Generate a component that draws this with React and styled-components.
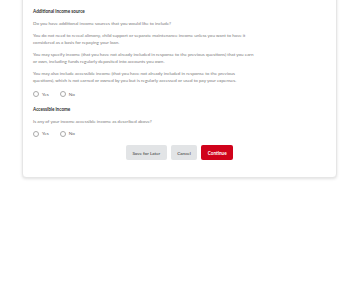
import styled, { createGlobalStyle } from "styled-components";

const GlobalStyle = createGlobalStyle`
  html, body {
    margin: 0;
    padding: 0;
    background: #ffffff;
  }
  body {
    font-family: Lato, "Open Sans", sans-serif;
    -webkit-text-size-adjust: none;
  }
`;

export default function App() {
  return (
    <>
      <GlobalStyle />
      <Page>
        <Card>
          <Body>
            <Heading>Additional income source</Heading>
            <Text>Do you have additional income sources that you would like to include?</Text>
            <Text>
              You do not need to reveal alimony, child support or separate maintenance income unless you want to have it
              considered as a basis for repaying your loan.
            </Text>
            <Text>
              You may specify income (that you have not already included in response to the previous questions) that you
              earn or own, including funds regularly deposited into accounts you own.
            </Text>
            <Text>
              You may also include accessible income (that you have not already included in response to the previous
              questions), which is not earned or owned by you but is regularly accessed or used to pay your expenses.
            </Text>
            <Radios>
              <Choice><Circle />Yes</Choice>
              <Choice><Circle />No</Choice>
            </Radios>

            <Heading>Accessible income</Heading>
            <Text>Is any of your income accessible income as described above?</Text>
            <Radios $tight>
              <Choice><Circle />Yes</Choice>
              <Choice><Circle />No</Choice>
            </Radios>
          </Body>

          <Actions>
            <Button>Save for Later</Button>
            <Button>Cancel</Button>
            <Button $primary>Continue</Button>
          </Actions>
        </Card>
      </Page>
    </>
  );
}

const Page = styled.div`
  width: 360px;
  height: 297px;
  padding: 0 23px 0 22px;
  box-sizing: border-box;
`;

const Card = styled.div`
  margin-top: -20px;
  padding: 27px 10px 17px;
  border: 1px solid #e6e6e6;
  border-radius: 4px;
  box-shadow: 0 1px 3px rgba(0, 0, 0, 0.12);
  background: #fff;
`;

const Body = styled.div`
  width: 222px;
`;

const Heading = styled.h3`
  margin: 0 0 5px;
  font-size: 4.6px;
  line-height: 7px;
  font-weight: 700;
  color: #2e2e2e;
`;

const Text = styled.p`
  margin: 0 0 4.5px;
  font-size: 4.5px;
  line-height: 7.2px;
  color: #7c7c7c;
`;

const Radios = styled.div`
  display: flex;
  gap: 11px;
  margin: ${(p) => (p.$tight ? "5px 0 8px" : "7px 0 8px")};
`;

const Choice = styled.label`
  display: flex;
  align-items: center;
  gap: 3px;
  font-size: 4.6px;
  line-height: 7px;
  color: #666;
`;

const Circle = styled.span`
  width: 6px;
  height: 6px;
  border: 0.6px solid #aaa;
  border-radius: 50%;
  box-sizing: border-box;
`;

const Actions = styled.div`
  display: flex;
  justify-content: center;
  gap: 4px;
  margin-top: 7px;
`;

const Button = styled.button`
  height: 15px;
  padding: 0 6.5px;
  border: none;
  border-radius: 2px;
  font-family: Lato, "Open Sans", sans-serif;
  font-size: 4.6px;
  font-weight: ${(p) => (p.$primary ? 700 : 400)};
  color: ${(p) => (p.$primary ? "#fff" : "#333")};
  background: ${(p) => (p.$primary ? "#d0021b" : "#e2e4e6")};
`;
